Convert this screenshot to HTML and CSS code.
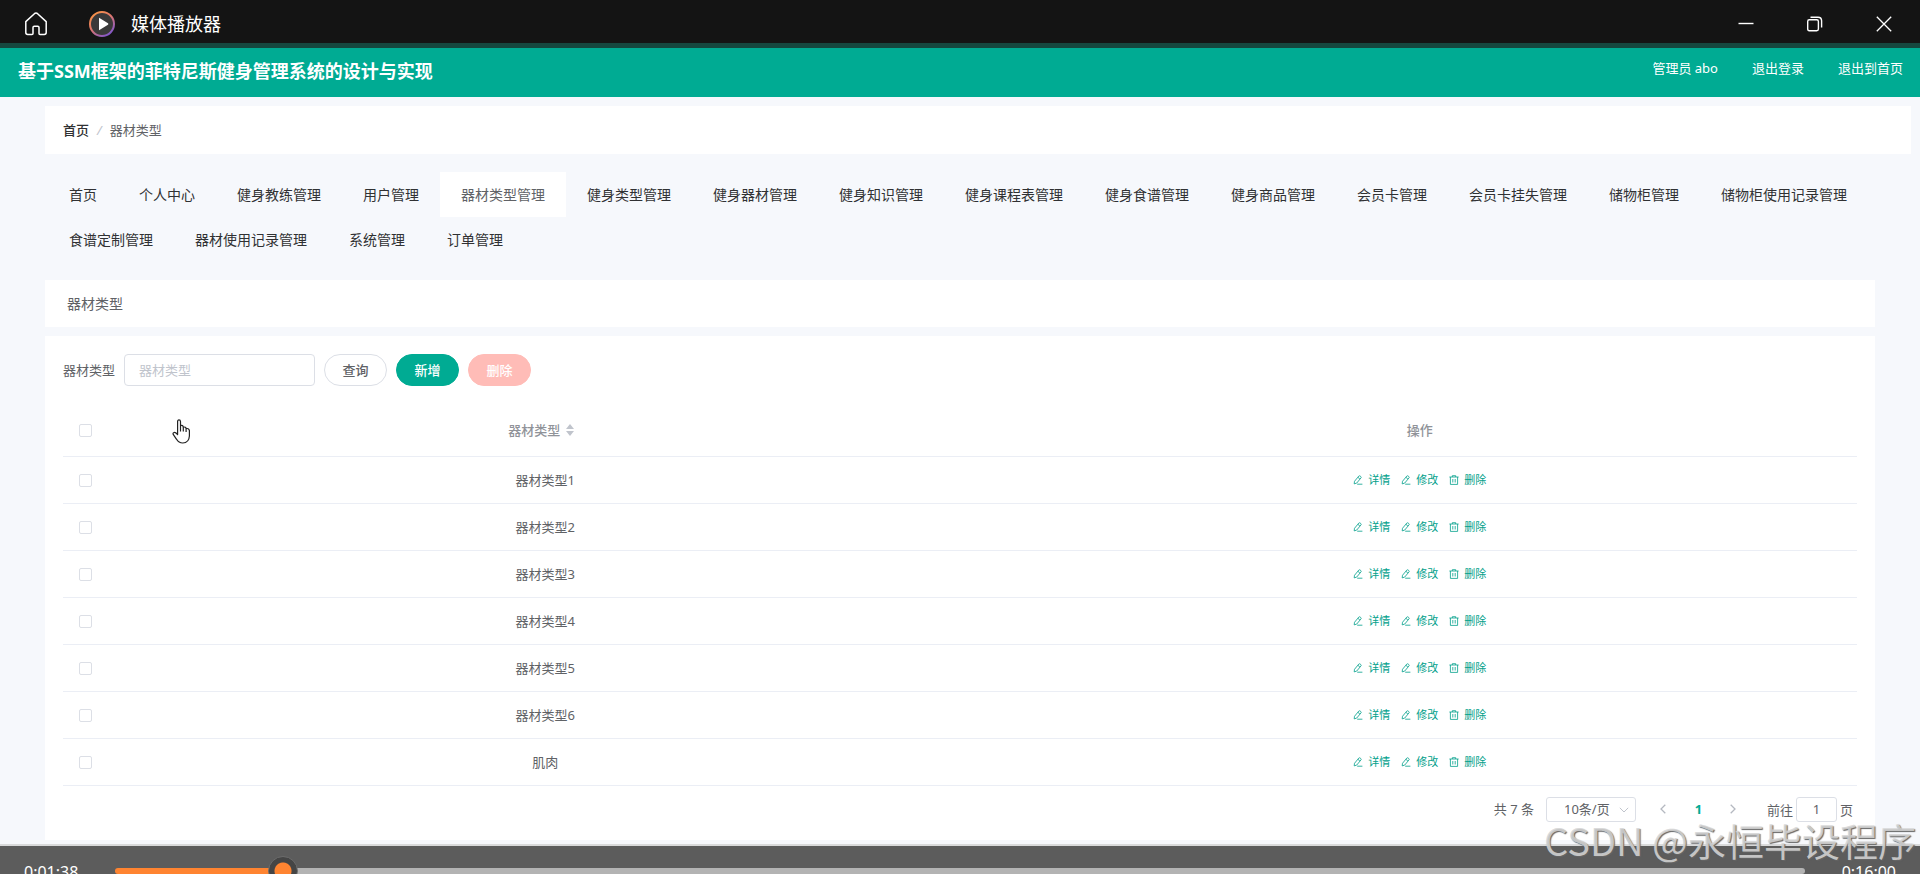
FILE: index.html
```html
<!DOCTYPE html>
<html lang="zh-CN">
<head>
  <meta charset="UTF-8">
  <title>媒体播放器</title>
  <link rel="stylesheet" href="styles.css">
</head>
<body>
  <!-- icons used more than once -->
  <svg class="sprite" aria-hidden="true">
    <symbol id="i-edit" viewBox="0 0 10 10">
      <path d="M1.2 8.9 1.5 6.3 5.8 1.1Q6.4.5 7.1 1L7.9 1.7Q8.5 2.3 8 2.9L3.7 8.1 1.2 8.9M4.9 2.3 6.9 4M4.2 9.2H9.4" fill="none" stroke="currentColor" stroke-width=".8"/>
    </symbol>
    <symbol id="i-delete" viewBox="0 0 10 10">
      <path d="M.4 2H9.6M3.3 2V.7H6.7V2M1.4 2V9.4H8.6V2M3.8 4V7.5M6.2 4V7.5" fill="none" stroke="currentColor" stroke-width=".8"/>
    </symbol>
  </svg>

  <div class="titlebar">
    <button class="tb-btn" aria-label="主页">
      <svg width="24" height="24" viewBox="0 0 24 24"><path d="M1.8 9.6 10.4 1.7Q12 .4 13.6 1.7L22.2 9.6V20.5Q22.2 22.4 20.3 22.4H16Q15 22.4 15 21.4V15.5Q15 14.2 13.7 14.2H10.3Q9 14.2 9 15.5V21.4Q9 22.4 8 22.4H3.7Q1.8 22.4 1.8 20.5Z" fill="none" stroke="#fff" stroke-width="1.5" stroke-linejoin="round"/></svg>
    </button>
    <svg class="logo" width="26" height="26" viewBox="0 0 26 26">
      <defs>
        <linearGradient id="ring" x1="0" y1="0" x2=".7" y2="1"><stop offset="0" stop-color="#ff9a3c"/><stop offset=".5" stop-color="#e0786c"/><stop offset="1" stop-color="#8458c8"/></linearGradient>
      </defs>
      <circle cx="13" cy="13" r="12" fill="#3a3a3a" stroke="url(#ring)" stroke-width="2"/>
      <path d="M10 6.8 19 12.3Q19.8 13 19 13.7L10 19.2Z" fill="#fff"/>
    </svg>
    <span class="app-name">媒体播放器</span>
    <div class="win-btns">
      <button class="tb-btn" aria-label="最小化"><svg width="16" height="16" viewBox="0 0 16 16"><path d="M.5 7.5H15.5" stroke="#fff" stroke-width="1.4"/></svg></button>
      <button class="tb-btn" aria-label="还原"><svg width="16" height="16" viewBox="0 0 16 16"><path d="M2.3 3.8H9.7Q11.4 3.8 11.4 5.5V13Q11.4 14.7 9.7 14.7H2.3Q.7 14.7.7 13V5.5Q.7 3.8 2.3 3.8ZM3.5 1.2H11Q14.6 1.2 14.6 4.8V11.6" fill="none" stroke="#fff" stroke-width="1.4"/></svg></button>
      <button class="tb-btn" aria-label="关闭"><svg width="16" height="16" viewBox="0 0 16 16"><path d="M.8.8 15.2 15.2M15.2.8.8 15.2" stroke="#fff" stroke-width="1.3"/></svg></button>
    </div>
  </div>

  <header class="header">
    <h1>基于SSM框架的菲特尼斯健身管理系统的设计与实现</h1>
    <div class="user-links">
      <span>管理员 abo</span>
      <a href="#">退出登录</a>
      <a href="#">退出到首页</a>
    </div>
  </header>

  <main class="main">
    <div class="breadcrumb"><a href="#">首页</a><i>/</i><span>器材类型</span></div>

    <nav class="menu">
      <a href="#">首页</a>
      <a href="#">个人中心</a>
      <a href="#">健身教练管理</a>
      <a href="#">用户管理</a>
      <a href="#" class="active">器材类型管理</a>
      <a href="#">健身类型管理</a>
      <a href="#">健身器材管理</a>
      <a href="#">健身知识管理</a>
      <a href="#">健身课程表管理</a>
      <a href="#">健身食谱管理</a>
      <a href="#">健身商品管理</a>
      <a href="#">会员卡管理</a>
      <a href="#">会员卡挂失管理</a>
      <a href="#">储物柜管理</a>
      <a href="#">储物柜使用记录管理</a>
      <a href="#">食谱定制管理</a>
      <a href="#">器材使用记录管理</a>
      <a href="#">系统管理</a>
      <a href="#">订单管理</a>
    </nav>

    <h2 class="page-title">器材类型</h2>

    <section class="card">
      <form class="search">
        <label for="typeName">器材类型</label>
        <input type="text" id="typeName" placeholder="器材类型">
        <button type="button" class="btn">查询</button>
        <button type="button" class="btn primary">新增</button>
        <button type="button" class="btn danger" disabled>删除</button>
      </form>

      <table class="list">
        <colgroup><col class="col-check"><col><col></colgroup>
        <thead>
          <tr>
            <th><input type="checkbox" aria-label="全选"></th>
            <th><span class="sortable">器材类型<svg width="8" height="12" viewBox="0 0 8 12"><path d="M4 0 8 5H0ZM4 12 0 7H8Z" fill="#c0c4cc"/></svg></span></th>
            <th>操作</th>
          </tr>
        </thead>
        <tbody id="rows"></tbody>
      </table>

      <div class="pagination">
        <span>共 7 条</span>
        <span class="size-wrap">
          <select aria-label="每页条数"><option>10条/页</option></select>
          <svg width="10" height="6" viewBox="0 0 10 6"><path d="M.8.8 5 5 9.2.8" fill="none" stroke="#c0c4cc"/></svg>
        </span>
        <div class="pager">
          <button aria-label="上一页"><svg width="6" height="10" viewBox="0 0 6 10"><path d="M5.3.8 1 5 5.3 9.2" fill="none" stroke="#b4b8c0" stroke-width="1.3"/></svg></button>
          <button class="current">1</button>
          <button aria-label="下一页"><svg width="6" height="10" viewBox="0 0 6 10"><path d="M.7.8 5 5 .7 9.2" fill="none" stroke="#b4b8c0" stroke-width="1.3"/></svg></button>
        </div>
        <label class="jump">前往<input type="text" value="1">页</label>
      </div>
    </section>

    <!-- mouse pointer -->
    <svg class="pointer" width="19" height="25" viewBox="0 0 19 25"><path d="M5.6 15.5V2.6Q5.6.8 7 .8T8.5 2.6V8.5 6.6Q10.2 5.9 11.2 7.3V8.4Q13 7.4 14 8.9V9.8Q15.7 9 16.9 10.4L17.4 11.5V17Q17 23.6 10.8 24 6.6 24 4.6 20.3L1.2 15.4Q.6 14 2 13.5 3.5 13.2 5.6 15.5ZM8.5 8V12.5M11.3 8.4V12.5M14.1 9.8V13" fill="#fff" stroke="#222" stroke-width="1.2" stroke-linejoin="round"/></svg>
  </main>

  <footer class="player">
    <span>0:01:38</span>
    <input type="range" min="0" max="1000" value="92" aria-label="进度" style="--played: 10%">
    <span>0:16:00</span>
  </footer>
  <div class="watermark">CSDN @永恒毕设程序</div>

  <script>
    const names = ['器材类型1', '器材类型2', '器材类型3', '器材类型4', '器材类型5', '器材类型6', '肌肉'];
    const action = (icon, text) =>
      '<button class="link"><svg width="10" height="10"><use href="#' + icon + '"/></svg>' + text + '</button>';

    document.getElementById('rows').innerHTML = names.map(name =>
      '<tr><td><input type="checkbox" aria-label="' + name + '"></td>' +
      '<td>' + name + '</td>' +
      '<td><div class="actions">' + action('i-edit', '详情') + action('i-edit', '修改') + action('i-delete', '删除') + '</div></td></tr>'
    ).join('');
  </script>
</body>
</html>
```
FILE: styles.css
```css
* {
  box-sizing: border-box;
}

body {
  margin: 0;
  height: 100vh;
  display: flex;
  flex-direction: column;
  overflow: hidden;
  background: #f6f8fc;
  color: #606266;
  font-family: "Noto Sans", "Noto Sans CJK SC", sans-serif;
  font-size: 13px;
  line-height: 20px;
}

a {
  color: inherit;
  text-decoration: none;
}

button,
input,
select {
  font: inherit;
  color: inherit;
  margin: 0;
}

button {
  padding: 0;
  border: none;
  background: none;
  cursor: pointer;
}

.sprite {
  display: none;
}

/* window title bar */
.titlebar {
  flex: none;
  display: flex;
  align-items: center;
  height: 48px;
  padding: 4px 28px 0 24px;
  background: #141414;
  border-bottom: 5px solid #15483f;
  color: #fff;
}

.tb-btn {
  display: flex;
}

.tb-btn svg,
.logo {
  display: block;
}

.logo {
  margin-left: 41px;
}

.app-name {
  margin-left: 16px;
  font-size: 18px;
}

.win-btns {
  display: flex;
  gap: 53px;
  margin-left: auto;
}

/* system header */
.header {
  flex: none;
  display: flex;
  justify-content: space-between;
  height: 49px;
  padding: 10px 17px 10px 18px;
  background: #00ab93;
  color: #fff;
}

.header h1 {
  margin: 0;
  font-size: 18px;
  line-height: 26px;
}

.user-links {
  display: flex;
  gap: 34px;
}

.main {
  flex: 1;
  min-height: 0;
  overflow: hidden;
  position: relative;
  padding: 9px 45px 0;
}

.breadcrumb {
  margin-right: -36px;
  padding: 14px 18px;
  background: #fff;
}

.breadcrumb a {
  color: #303133;
  font-weight: 500;
}

.breadcrumb i {
  margin: 0 8px;
  color: #c0c4cc;
}

.menu {
  display: flex;
  flex-wrap: wrap;
  margin: 18px 0;
  padding-left: 3px;
  color: #303133;
}

.menu a {
  padding: 0 21px;
  font-size: 14px;
  line-height: 45px;
}

.menu .active {
  background: #fff;
  color: #606266;
}

.page-title {
  margin: 0 0 9px;
  padding: 0 22px;
  background: #fff;
  font-size: 14px;
  font-weight: 400;
  line-height: 47px;
}

.card {
  padding: 18px 18px 18px;
  background: #fff;
}

.search {
  display: flex;
  align-items: center;
  gap: 9px;
}

.search input {
  width: 191px;
  height: 32px;
  padding: 0 14px;
  border: 1px solid #dcdfe6;
  border-radius: 4px;
}

.search input::placeholder {
  color: #c0c4cc;
}

.btn {
  width: 63px;
  height: 32px;
  border: 1px solid #dcdfe6;
  border-radius: 16px;
  font-weight: 500;
}

.btn.primary {
  background: #00ab93;
  border-color: #00ab93;
  color: #fff;
}

.btn.danger {
  background: #ffbcb7;
  border-color: #ffbcb7;
  color: #fff;
}

/* table */
.list {
  width: 100%;
  margin-top: 18px;
  border-collapse: collapse;
  table-layout: fixed;
  text-align: center;
}

.col-check {
  width: 45px;
}

.list th,
.list td {
  height: 47px;
  padding: 0;
  border-bottom: 1px solid #ebeef5;
}

.list th {
  height: 52px;
  color: #909399;
  font-weight: 500;
}

.list input {
  appearance: none;
  display: block;
  width: 13px;
  height: 13px;
  margin: 2px auto 0;
  border: 1px solid #dcdfe6;
  border-radius: 2px;
  background: #fff;
}

.sortable {
  display: inline-flex;
  align-items: center;
  gap: 6px;
  padding-right: 8px;
}

.actions {
  display: flex;
  justify-content: center;
  gap: 11px;
}

.link {
  display: flex;
  align-items: center;
  gap: 5px;
  color: #00a08a;
  font-size: 11px;
}

/* pagination */
.pagination {
  display: flex;
  justify-content: flex-end;
  align-items: center;
  padding: 11px 4px 0;
}

.size-wrap {
  position: relative;
  margin: 0 10px 0 12px;
}

.size-wrap svg {
  position: absolute;
  right: 7px;
  top: 10px;
}

.pagination select,
.jump input {
  height: 25px;
  border: 1px solid #dcdfe6;
  border-radius: 3px;
  background: #fff;
}

.pagination select {
  appearance: none;
  display: block;
  width: 90px;
  padding: 0 17px;
}

.pager {
  display: flex;
}

.pager button {
  width: 35px;
}

.pager .current {
  color: #00ab93;
  font-weight: 700;
}

.jump {
  margin-left: 16px;
}

.jump input {
  width: 41px;
  margin: 0 3px;
  text-align: center;
}

.pointer {
  position: absolute;
  left: 172px;
  top: 322px;
}

/* player bar, cut off by the bottom of the window */
.player {
  flex: none;
  display: flex;
  align-items: flex-start;
  height: 30px;
  padding: 9px 24px 0;
  overflow: hidden;
  background: #5c5c5c;
  border-top: 2px solid #d9dadb;
  color: #fff;
  font-size: 16px;
  line-height: 34px;
}

.player input {
  appearance: none;
  flex: 1;
  height: 32px;
  margin: 0 37px;
  background: none;
}

.player input::-webkit-slider-runnable-track {
  height: 6px;
  border-radius: 3px;
  background: linear-gradient(to right, #ff8431 var(--played), #b3b3b3 var(--played));
}

.player input::-webkit-slider-thumb {
  appearance: none;
  width: 30px;
  height: 30px;
  margin-top: -12px;
  border: 1px solid #6b6b6b;
  border-radius: 50%;
  background: radial-gradient(circle, #ff8431 8px, #454545 9px);
}

.watermark {
  position: absolute;
  right: 4px;
  bottom: 10px;
  color: rgba(215, 215, 215, 0.85);
  font-family: "Noto Sans CJK SC", sans-serif;
  font-size: 38px;
  font-weight: 400;
  line-height: 48px;
  text-shadow: 1px 1px 1px #666;
  pointer-events: none;
}
```
